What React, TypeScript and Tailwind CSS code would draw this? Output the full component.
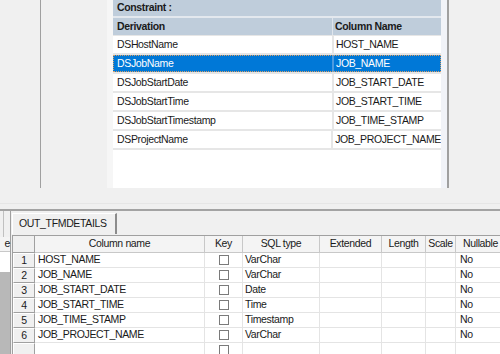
import React from "react";

const derivations = [
  ["DSHostName", "HOST_NAME"],
  ["DSJobName", "JOB_NAME"],
  ["DSJobStartDate", "JOB_START_DATE"],
  ["DSJobStartTime", "JOB_START_TIME"],
  ["DSJobStartTimestamp", "JOB_TIME_STAMP"],
  ["DSProjectName", "JOB_PROJECT_NAME"],
];

const columns = [
  ["HOST_NAME", "VarChar"],
  ["JOB_NAME", "VarChar"],
  ["JOB_START_DATE", "Date"],
  ["JOB_START_TIME", "Time"],
  ["JOB_TIME_STAMP", "Timestamp"],
  ["JOB_PROJECT_NAME", "VarChar"],
];

function Checkbox() {
  return <span className="block w-[10px] h-[10px] border border-[#7a7a7a] bg-white" />;
}

function ConstraintTable() {
  return (
    <div className="w-[328px] bg-white flex flex-col">
      <div className="h-[16px] bg-[#bfcddb] font-bold pl-[4px] flex items-center">Constraint :</div>
      <div className="h-[2px] bg-[#e3e8ee]" />
      <div className="h-[17px] flex font-bold">
        <div className="w-[219px] bg-[#bfcddb] pl-[4px] flex items-center">Derivation</div>
        <div className="w-px bg-[#dfe5ec]" />
        <div className="flex-1 bg-[#bfcddb] pl-[2px] flex items-center">Column Name</div>
      </div>
      <div className="h-px bg-[#e6e6e6]" />
      {derivations.map(([d, c], i) => {
        const sel = i === 1;
        return (
          <div key={d}>
            <div
              className={
                sel
                  ? "h-[17px] flex bg-[#0078d7] text-white outline outline-1 outline-dotted outline-[#d9a066] -outline-offset-1"
                  : "h-[17px] flex"
              }
            >
              <div className="w-[219px] pl-[4px] flex items-center">{d}</div>
              <div className={sel ? "w-[2px] bg-[#4d9be0]" : "w-[2px] bg-[#e6e6e6]"} />
              <div className="flex-1 pl-[2px] flex items-center whitespace-nowrap">{c}</div>
            </div>
            <div className="h-[2px] bg-[#e6e6e6]" />
          </div>
        );
      })}
    </div>
  );
}

function HeaderCell({ w, label }: { w: string; label: string }) {
  return (
    <div className={`${w} shrink-0 h-full bg-[#f4f4f4] border-r border-b border-[#c8c8c8] flex items-center justify-center whitespace-nowrap`}>
      {label}
    </div>
  );
}

function ColumnGrid() {
  return (
    <div className="flex-1 border-l border-t border-[#a0a0a0] bg-white flex flex-col overflow-hidden">
      <div className="h-[17px] flex shrink-0">
        <div className="w-[22px] shrink-0 h-full bg-[#f0f0f0] border-r border-b border-[#a0a0a0]" />
        <HeaderCell w="w-[170px]" label="Column name" />
        <HeaderCell w="w-[38px]" label="Key" />
        <HeaderCell w="w-[77px]" label="SQL type" />
        <HeaderCell w="w-[62px]" label="Extended" />
        <HeaderCell w="w-[44px]" label="Length" />
        <HeaderCell w="w-[30px]" label="Scale" />
        <HeaderCell w="w-[50px]" label="Nullable" />
      </div>
      {[...columns, ["", ""]].map(([name, type], i) => (
        <div key={i} className="h-[15px] flex shrink-0">
          <div className="w-[22px] shrink-0 h-full bg-[#f0f0f0] border-t border-l border-white border-r border-r-[#a0a0a0] border-b border-b-[#a0a0a0] flex items-center justify-center">
            {name ? i + 1 : ""}
          </div>
          <div className="w-[170px] shrink-0 border-r border-b border-[#e4e4e4] pl-[3px] flex items-center">{name}</div>
          <div className="w-[38px] shrink-0 border-r border-b border-[#e4e4e4] flex items-center justify-center">
            <Checkbox />
          </div>
          <div className="w-[77px] shrink-0 border-r border-b border-[#e4e4e4] pl-[2px] flex items-center">{type}</div>
          <div className="w-[62px] shrink-0 border-r border-b border-[#e4e4e4]" />
          <div className="w-[44px] shrink-0 border-r border-b border-[#e4e4e4]" />
          <div className="w-[30px] shrink-0 border-r border-b border-[#e4e4e4]" />
          <div className="w-[50px] shrink-0 border-b border-[#e4e4e4] pl-[4px] flex items-center">{name ? "No" : ""}</div>
        </div>
      ))}
    </div>
  );
}

export default function App() {
  return (
    <div className="w-[500px] h-[354px] bg-[#f0f0f0] overflow-hidden flex flex-col text-[10.5px] tracking-[-0.35px] text-[#1a1a1a] font-['Liberation_Sans',Arial,sans-serif]">
      <div className="h-[188px] flex shrink-0">
        <div className="w-[40px]" />
        <div className="w-px bg-[#a0a0a0]" />
        <div className="w-[66px]" />
        <div className="w-[6px] bg-[#f6f6f6]" />
        <ConstraintTable />
        <div className="w-[6px] bg-[#f1f3f8]" />
        <div className="w-[2px] bg-[#a0a0a0]" />
        <div className="flex-1" />
      </div>
      <div className="h-[21px] shrink-0 flex flex-col">
        <div className="h-[15px]" />
        <div className="h-px bg-[#e6e6e6]" />
      </div>
      <div className="flex-1 flex border-t-2 border-[#a3a3a3] min-h-0">
        <div className="w-[11px] shrink-0 flex flex-col border-r border-[#a0a0a0]">
          <div className="h-[26px] border-r border-[#c0c0c0] w-[4px]" />
          <div className="h-[15px] bg-[#f4f4f4] border-b border-[#c8c8c8] flex items-center justify-end">
            <span>e</span>
          </div>
          <div className="h-[20px] bg-white" />
          <div className="flex-1 bg-[#b8b8b8]" />
        </div>
        <div className="flex-1 flex flex-col min-w-0">
          <div className="h-[23px] shrink-0 flex items-end pl-px">
            <div className="h-[21px] w-[105px] bg-[#f0f0f0] border-t border-l border-white border-r-2 border-r-[#8c8c8c] pl-[6px] flex items-center">
              OUT_TFMDETAILS
            </div>
          </div>
          <div className="flex-1 flex min-h-0 pl-px pt-px">
            <ColumnGrid />
          </div>
        </div>
      </div>
    </div>
  );
}
